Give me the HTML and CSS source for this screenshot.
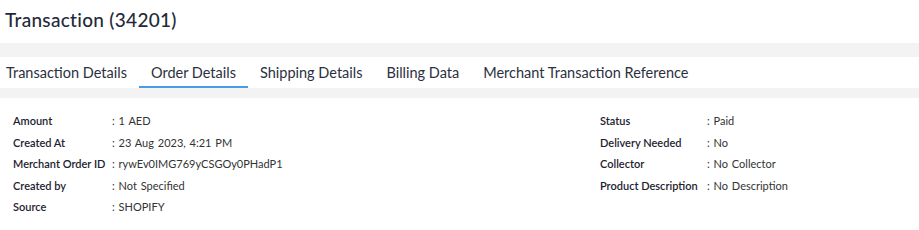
FILE: index.html
```html
<!DOCTYPE html>
<html lang="en">
<head>
    <meta charset="UTF-8">
    <meta name="viewport" content="width=device-width, initial-scale=1.0">
    <title>Transaction (34201)</title>
    <link rel="stylesheet" href="styles.css">
</head>
<body>
    <h1 class="page-title">Transaction (34201)</h1>

    <div class="band band-top"></div>
    <nav class="tabs">
        <a class="tab" href="#">Transaction Details</a>
        <a class="tab active" href="#">Order Details</a>
        <a class="tab" href="#">Shipping Details</a>
        <a class="tab" href="#">Billing Data</a>
        <a class="tab" href="#">Merchant Transaction Reference</a>
    </nav>
    <div class="band band-bottom"></div>

    <div class="details">
        <div class="detail-col">
            <div class="row"><span class="label">Amount</span><span class="value">: 1 AED</span></div>
            <div class="row"><span class="label">Created At</span><span class="value">: 23 Aug 2023, 4:21 PM</span></div>
            <div class="row"><span class="label">Merchant Order ID</span><span class="value">: rywEv0IMG769yCSGOy0PHadP1</span></div>
            <div class="row"><span class="label">Created by</span><span class="value">: Not Specified</span></div>
            <div class="row"><span class="label">Source</span><span class="value">: SHOPIFY</span></div>
        </div>
        <div class="detail-col right">
            <div class="row"><span class="label">Status</span><span class="value">: Paid</span></div>
            <div class="row"><span class="label">Delivery Needed</span><span class="value">: No</span></div>
            <div class="row"><span class="label">Collector</span><span class="value">: No Collector</span></div>
            <div class="row"><span class="label">Product Description</span><span class="value">: No Description</span></div>
        </div>
    </div>
</body>
</html>
```

FILE: styles.css
```css
:root {
    --text-dark: #1f2a3a;
    --tab-text: #2b3040;
    --band: #f3f3f3;
    --accent: #4b9be6;
}

body {
    margin: 0;
    font-family: "Lato", "Noto Sans", sans-serif;
    background: #fff;
    color: var(--text-dark);
}

.page-title {
    margin: 0;
    height: 43px;
    padding-left: 5px;
    font-size: 19px;
    font-weight: 500;
    line-height: 40px;
    letter-spacing: 0.3px;
}

.band {
    background: var(--band);
}

.band-top {
    height: 14px;
}

.band-bottom {
    height: 10px;
}

.tabs {
    display: flex;
    height: 31px;
}

.tab {
    display: block;
    padding: 0 12px;
    font-size: 14.5px;
    line-height: 31px;
    color: var(--tab-text);
    text-decoration: none;
    box-sizing: border-box;
}

.tab:first-child {
    padding-left: 6px;
}

.tab.active {
    border-bottom: 2px solid var(--accent);
}

.details {
    display: grid;
    grid-template-columns: 1fr 319px;
    padding: 12px 0 0 13px;
}

.row {
    display: flex;
    height: 21.5px;
    align-items: center;
    font-size: 11px;
}

.label {
    width: 99px;
    font-weight: 600;
    color: #1d2230;
}

.right .label {
    width: 107px;
}

.value {
    color: #333;
    word-spacing: 1px;
}
```
